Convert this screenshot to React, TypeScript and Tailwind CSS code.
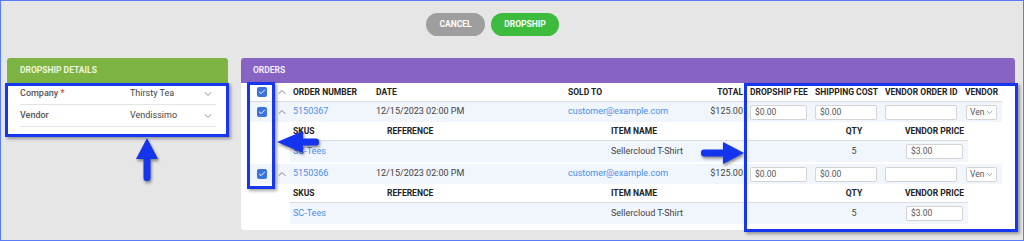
import { ChevronDown, ChevronUp, Check } from "lucide-react";

const Checkbox = () => (
  <div className="w-[10px] h-[10px] rounded-[2px] bg-[#3a72e0] flex items-center justify-center">
    <Check size={8} strokeWidth={3} color="#ffffff" />
  </div>
);

const Caret = () => <ChevronUp size={12} strokeWidth={1.5} color="#555555" />;

const Input = ({ value, w }: { value: string; w: string }) => (
  <div className={`${w} h-[15px] bg-white border border-[#d4d4d4] rounded-[2px] flex items-center pl-[4px] text-[8.5px] text-[#555]`}>
    {value}
  </div>
);

const VendorSelect = () => (
  <div className="w-[31px] h-[15px] bg-white border border-[#d4d4d4] rounded-[2px] flex items-center justify-between pl-[3px] pr-[2px] text-[8.5px] text-[#555]">
    <span>Ven</span>
    <ChevronDown size={9} strokeWidth={1.5} color="#555" />
  </div>
);

const hdr = "text-[8.5px] font-bold text-[#222] uppercase";

const OrderBlock = ({ orderNo, first }: { orderNo: string; first?: boolean }) => (
  <>
    <div className={`flex items-center h-[20px] bg-[#f1f5fc] ${first ? "" : "mt-[2px]"} text-[9px] text-[#444]`}>
      <div className="w-[23px] pl-[9px]"><Checkbox /></div>
      <div className="w-[18px] pl-[5px]"><Caret /></div>
      <div className="w-[83px] px-[4px] text-[#4a8fe6]">{orderNo}</div>
      <div className="w-[192px] px-[4px]">12/15/2023 02:00 PM</div>
      <div className="w-[136px] px-[4px] text-[#4a8fe6]">customer@example.com</div>
      <div className="w-[46px] pr-[3px] text-right">$125.00</div>
      <div className="w-[65px] pl-[4px]"><Input value="$0.00" w="w-[57px]" /></div>
      <div className="w-[70px] pl-[4px]"><Input value="$0.00" w="w-[62px]" /></div>
      <div className="w-[80px] pl-[4px]"><Input value="" w="w-[72px]" /></div>
      <div className="w-[41px] pl-[5px]"><VendorSelect /></div>
    </div>
    <div className="ml-[42px] w-[678px]">
      <div className="flex items-center h-[19px] border-b border-[#dcdcdc]">
        <div className={`w-[94px] px-[3px] ${hdr}`}>SKUs</div>
        <div className={`w-[224px] px-[3px] ${hdr}`}>Reference</div>
        <div className={`w-[222px] px-[3px] ${hdr}`}>Item Name</div>
        <div className={`w-[48px] text-center ${hdr}`}>Qty</div>
        <div className="w-[24px]" />
        <div className={`w-[66px] px-[3px] ${hdr}`}>Vendor Price</div>
      </div>
      <div className="flex items-center h-[21px] bg-[#f1f5fc] text-[9px] text-[#444]">
        <div className="w-[94px] px-[3px] text-[#4a8fe6]">SC-Tees</div>
        <div className="w-[224px] px-[3px]" />
        <div className="w-[222px] px-[3px]">Sellercloud T-Shirt</div>
        <div className="w-[48px] text-center">5</div>
        <div className="w-[24px]" />
        <div className="w-[66px] pl-[4px]"><Input value="$3.00" w="w-[57px]" /></div>
      </div>
    </div>
  </>
);

const App = () => {
  return (
    <div className="relative w-[1024px] h-[241px] overflow-hidden border border-[#5b7cf5] bg-[#e6e6e6] font-['Roboto',sans-serif]">
      <div className="flex gap-[6px] pl-[425px] pt-[12px]">
        <button className="w-[59px] h-[23px] rounded-full bg-[#9e9e9e] text-white text-[8.5px] font-bold">CANCEL</button>
        <button className="w-[68px] h-[23px] rounded-full bg-[#3dbb3d] text-white text-[8.5px] font-bold">DROPSHIP</button>
      </div>

      <div className="flex gap-[13px] pl-[6px] mt-[22px]">
        <div className="w-[221px] self-start bg-white rounded-t-[3px]">
          <div className="h-[25px] bg-[#7cb342] rounded-t-[3px] flex items-center pl-[13px] text-[8.5px] font-bold text-[#f0f7dc]">
            DROPSHIP DETAILS
          </div>
          <div className="px-[13px] pr-[12px] pb-[7px] text-[9px]">
            <div className="flex items-center h-[22px] border-b border-[#e4e4e4]">
              <div className="w-[110px] font-medium text-[#555]">
                Company <span className="text-[#e53935]">*</span>
              </div>
              <div className="flex-1 text-[#444]">Thirsty Tea</div>
              <ChevronDown size={12} strokeWidth={1.4} color="#666" className="mr-[2px]" />
            </div>
            <div className="flex items-center h-[22px] border-b border-[#e4e4e4]">
              <div className="w-[110px] font-medium text-[#555]">Vendor</div>
              <div className="flex-1 text-[#444]">Vendissimo</div>
              <ChevronDown size={12} strokeWidth={1.4} color="#666" className="mr-[2px]" />
            </div>
          </div>
        </div>

        <div className="w-[774px] h-[172px] bg-white rounded-[3px]">
          <div className="h-[25px] bg-[#8763c4] rounded-t-[3px] flex items-center pl-[12px] text-[8.5px] font-bold text-[#f3eefb]">
            ORDERS
          </div>
          <div className="pl-[7px]">
            <div className="flex items-center h-[19px] w-[754px] border-b border-[#dcdcdc]">
              <div className="w-[23px] pl-[9px]"><Checkbox /></div>
              <div className="w-[18px] pl-[5px]"><Caret /></div>
              <div className={`w-[83px] px-[4px] ${hdr}`}>Order Number</div>
              <div className={`w-[192px] px-[4px] ${hdr}`}>Date</div>
              <div className={`w-[136px] px-[4px] ${hdr}`}>Sold To</div>
              <div className={`w-[46px] pr-[3px] text-right ${hdr}`}>Total</div>
              <div className={`w-[65px] pl-[4px] ${hdr}`}>Dropship Fee</div>
              <div className={`w-[70px] pl-[4px] ${hdr}`}>Shipping Cost</div>
              <div className={`w-[80px] pl-[4px] ${hdr}`}>Vendor Order ID</div>
              <div className={`w-[41px] pl-[4px] ${hdr}`}>Vendor</div>
            </div>
            <div className="w-[754px]">
              <OrderBlock orderNo="5150367" first />
              <OrderBlock orderNo="5150366" />
            </div>
          </div>
        </div>
      </div>

      {/* annotation boxes */}
      <div className="absolute left-[4px] top-[82px] w-[224px] h-[54px] border-[3px] border-[#1636f0] shadow-[2px_2px_3px_rgba(0,0,0,0.35)]" />
      <div className="absolute left-[246px] top-[81px] w-[28px] h-[107px] border-[3px] border-[#1636f0] shadow-[2px_2px_3px_rgba(0,0,0,0.35)]" />
      <div className="absolute left-[743px] top-[82px] w-[274px] h-[149px] border-[3px] border-[#1636f0] shadow-[2px_2px_3px_rgba(0,0,0,0.35)]" />

      {/* arrows */}
      <svg className="absolute left-0 top-0 drop-shadow-[1px_2px_1.5px_rgba(0,0,0,0.45)]" width="1024" height="241">
        <g fill="#1434ee">
          <polygon points="146,137 157,158 135,158" />
          <rect x="142.5" y="156" width="7" height="24" rx="3" />
          <polygon points="276,141 302,130 302,152" />
          <rect x="300" y="137.5" width="18" height="7" rx="3" />
          <polygon points="743,152 722,141 722,163" />
          <rect x="700" y="148.5" width="24" height="7" rx="3" />
        </g>
      </svg>
    </div>
  );
};

export default App;
